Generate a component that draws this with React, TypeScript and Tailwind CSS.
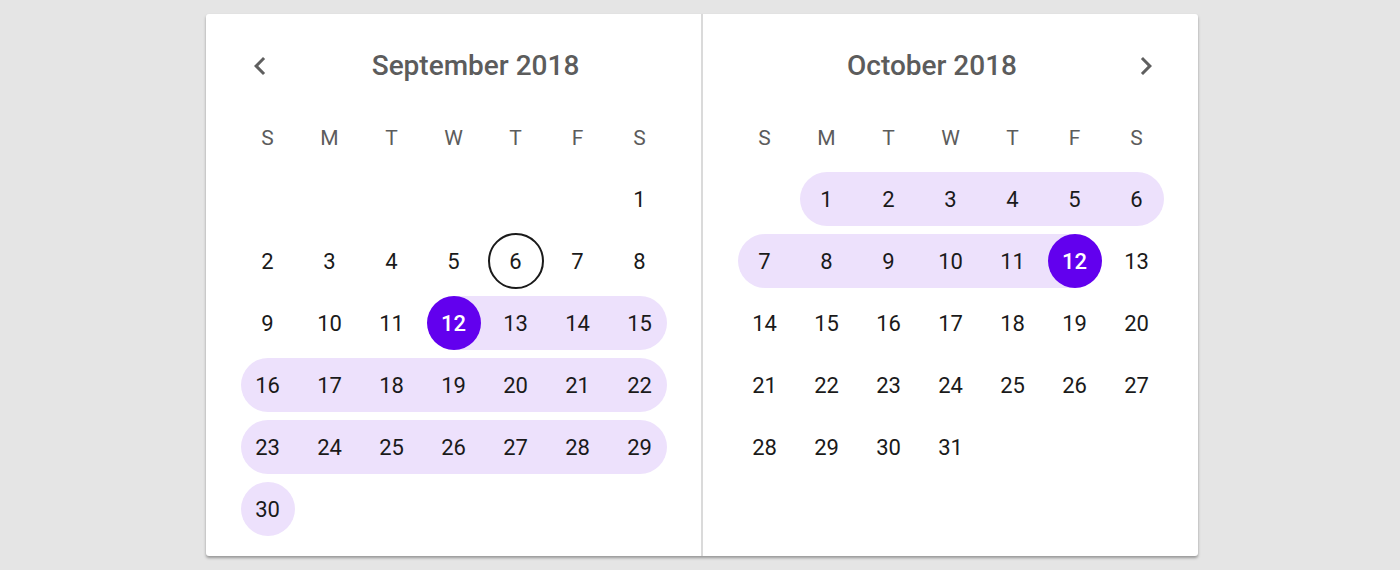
import React from 'react';

type Day = number | null;

// range: Sep 12 2018 -> Oct 12 2018
function buildWeeks(firstWeekday: number, days: number): Day[][] {
  const cells: Day[] = [];
  for (let i = 0; i < firstWeekday; i++) cells.push(null);
  for (let d = 1; d <= days; d++) cells.push(d);
  while (cells.length % 7 !== 0) cells.push(null);
  const weeks: Day[][] = [];
  for (let i = 0; i < cells.length; i += 7) weeks.push(cells.slice(i, i + 7));
  return weeks;
}

const WEEKDAYS = ['S', 'M', 'T', 'W', 'T', 'F', 'S'];

interface CellInfo {
  inRange: boolean;
  selected: boolean;
  rangeStart: boolean;
  rangeEnd: boolean;
  today: boolean;
}

function DayCell({ day, info, col, lastInMonth }: { day: Day; info: CellInfo; col: number; lastInMonth: boolean }) {
  if (day === null) return <div className="w-[62px] h-[62px]" />;

  const roundLeft = info.inRange && (col === 0 || day === 1);
  const roundRight = info.inRange && (col === 6 || lastInMonth);

  let band = null;
  if (info.inRange && !(info.rangeStart && info.rangeEnd)) {
    if (info.rangeStart) {
      band = <div className="absolute top-1 bottom-1 left-1/2 right-0 bg-[#ede1fc]" />;
    } else if (info.rangeEnd) {
      band = <div className="absolute top-1 bottom-1 left-0 right-1/2 bg-[#ede1fc]" />;
    } else {
      band = (
        <div
          className={`absolute top-1 bottom-1 bg-[#ede1fc] ${roundLeft ? 'left-1 rounded-l-full' : 'left-0'} ${
            roundRight ? 'right-1 rounded-r-full' : 'right-0'
          }`}
        />
      );
    }
  }

  return (
    <div className="relative w-[62px] h-[62px] flex items-center justify-center">
      {band}
      {info.selected ? (
        <div className="relative w-[54px] h-[54px] rounded-full bg-[#6200ee] flex items-center justify-center text-white font-medium">
          {day}
        </div>
      ) : info.today ? (
        <div className="relative w-[56px] h-[56px] rounded-full border-2 border-[#1a1a1a] flex items-center justify-center text-[#1a1a1a]">
          {day}
        </div>
      ) : (
        <span className="relative text-[#1a1a1a]">{day}</span>
      )}
    </div>
  );
}

function Chevron({ dir }: { dir: 'left' | 'right' }) {
  return (
    <button className="w-9 h-9 flex items-center justify-center shrink-0">
      <svg width="36" height="36" viewBox="0 0 24 24" fill="#5f5f5f">
        {dir === 'left' ? (
          <path d="M15.41 7.41L14 6l-6 6 6 6 1.41-1.41L10.83 12z" />
        ) : (
          <path d="M10 6L8.59 7.41 13.17 12l-4.58 4.59L10 18l6-6z" />
        )}
      </svg>
    </button>
  );
}

function Month({
  title,
  firstWeekday,
  days,
  side,
  infoFor,
}: {
  title: string;
  firstWeekday: number;
  days: number;
  side: 'left' | 'right';
  infoFor: (d: number) => CellInfo;
}) {
  const weeks = buildWeeks(firstWeekday, days);
  const empty: CellInfo = { inRange: false, selected: false, rangeStart: false, rangeEnd: false, today: false };

  return (
    <div className="flex-1 flex flex-col items-center pt-[34px]">
      <div className={`w-full h-9 flex items-center ${side === 'left' ? 'pl-[36px] pr-[28px]' : 'pl-[33px] pr-[34px]'}`}>
        {side === 'left' && <Chevron dir="left" />}
        <div className="flex-1 text-center text-[28px] leading-none font-medium text-[#5c5c5c]">{title}</div>
        {side === 'right' && <Chevron dir="right" />}
      </div>

      <div className="mt-[22px] grid grid-cols-7">
        {WEEKDAYS.map((w, i) => (
          <div key={i} className="w-[62px] h-[62px] pt-1 flex items-center justify-center text-[21px] text-[#5c5c5c]">
            {w}
          </div>
        ))}
        {weeks.map((week, wi) =>
          week.map((d, col) => (
            <DayCell
              key={`${wi}-${col}`}
              day={d}
              col={col}
              lastInMonth={d === days}
              info={d === null ? empty : infoFor(d)}
            />
          ))
        )}
      </div>
    </div>
  );
}

export default function App() {
  const sept = (d: number): CellInfo => ({
    inRange: d >= 12,
    selected: d === 12,
    rangeStart: d === 12,
    rangeEnd: false,
    today: d === 6,
  });
  const oct = (d: number): CellInfo => ({
    inRange: d <= 12,
    selected: d === 12,
    rangeStart: false,
    rangeEnd: d === 12,
    today: false,
  });

  return (
    <div className="w-[1400px] h-[570px] bg-[#e5e5e5] flex pl-[206px] pt-[14px] font-['Roboto',sans-serif] text-[22px]">
      <div className="w-[992px] h-[542px] bg-white rounded-[3px] shadow-[0_2px_3px_rgba(0,0,0,0.35)] flex">
        <Month title="September 2018" firstWeekday={6} days={30} side="left" infoFor={sept} />
        <div className="w-[2px] bg-[#dadada]" />
        <Month title="October 2018" firstWeekday={1} days={31} side="right" infoFor={oct} />
      </div>
    </div>
  );
}
